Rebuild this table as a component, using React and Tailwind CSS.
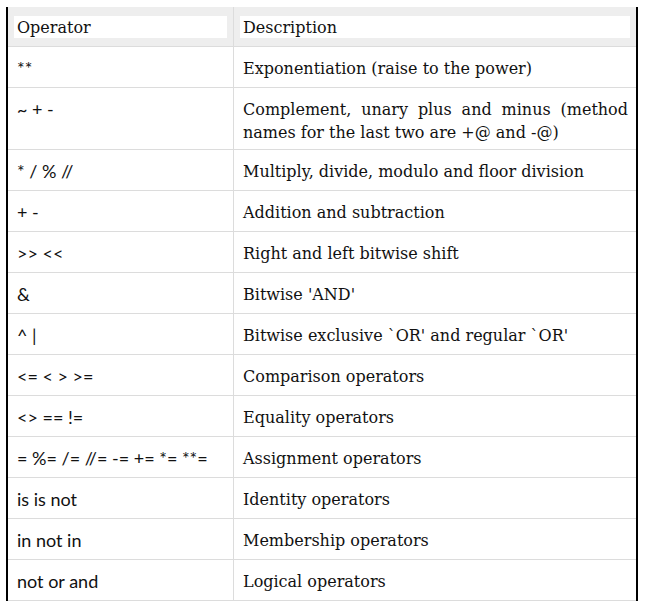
const rows = [
  ["**", "Exponentiation (raise to the power)"],
  ["~ + -", "Complement, unary plus and minus (method names for the last two are +@ and -@)"],
  ["* / % //", "Multiply, divide, modulo and floor division"],
  ["+ -", "Addition and subtraction"],
  [">> <<", "Right and left bitwise shift"],
  ["&", "Bitwise 'AND'"],
  ["^ |", "Bitwise exclusive `OR' and regular `OR'"],
  ["<= < > >=", "Comparison operators"],
  ["<> == !=", "Equality operators"],
  ["= %= /= //= -= += *= **=", "Assignment operators"],
  ["is is not", "Identity operators"],
  ["in not in", "Membership operators"],
  ["not or and", "Logical operators"],
];

export default function App() {
  return (
    <div className="w-[647px] h-[601px] overflow-hidden bg-white pt-[7px] pl-[6px]">
      <div className="w-[632px] border-l-2 border-r-2 border-black text-[#111]">
        <div className="grid grid-cols-[226px_1fr] h-[40px] bg-[#eeeeee] border-b border-[#dcdcdc]">
          <div className="px-[6px] pt-[9px] border-r border-[#dcdcdc]">
            <div className="bg-white h-[22px] pl-[3px] text-[16px] leading-[23px] font-['DejaVu_Serif',serif]">
              Operator
            </div>
          </div>
          <div className="px-[6px] pt-[9px]">
            <div className="bg-white h-[22px] pl-[3px] text-[16px] leading-[23px] font-['DejaVu_Serif',serif]">
              Description
            </div>
          </div>
        </div>
        {rows.map(([op, desc], i) => (
          <div
            key={i}
            className={
              "grid grid-cols-[226px_1fr] border-b border-[#dcdcdc] " +
              (i === 1 ? "h-[62px]" : "h-[41px]")
            }
          >
            <div className="border-r border-[#dcdcdc] pl-[9px] pt-[10px] text-[18px] leading-[22px] font-['Lato',sans-serif]">
              {op}
            </div>
            <div className="pl-[9px] pr-[8px] pt-[10px] text-[16px] leading-[23px] text-justify font-['DejaVu_Serif',serif]">
              {desc}
            </div>
          </div>
        ))}
      </div>
    </div>
  );
}
